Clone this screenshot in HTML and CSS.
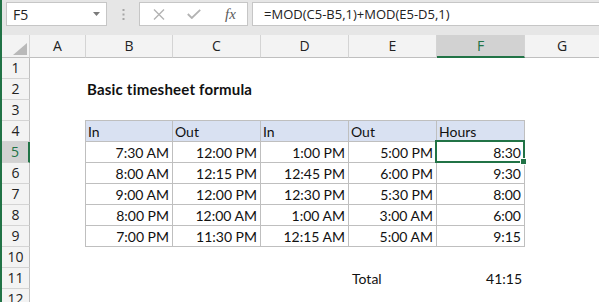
FILE: index.html
```html
<!DOCTYPE html>
<html lang="en">
<head>
    <meta charset="UTF-8">
    <title>Basic timesheet formula</title>
    <link rel="stylesheet" href="styles.css">
</head>
<body>

<div class="app">
    <div class="toolbar">
        <div class="name-box">
            <span>F5</span>
            <svg class="caret" width="7" height="4" viewBox="0 0 7 4"><path d="M0 0H7L3.5 4Z" fill="#7a7a7a"/></svg>
        </div>
        <svg class="grip" width="3" height="11" viewBox="0 0 3 11">
            <rect x="0.5" y="0" width="2" height="2" fill="#a6a6a6"/>
            <rect x="0.5" y="4.5" width="2" height="2" fill="#a6a6a6"/>
            <rect x="0.5" y="9" width="2" height="2" fill="#a6a6a6"/>
        </svg>
        <div class="fx-box">
            <svg width="12" height="11" viewBox="0 0 12 11"><path d="M1 0.5L11 10.5M11 0.5L1 10.5" stroke="#b3b3b3" stroke-width="1.4" fill="none"/></svg>
            <svg width="14" height="10" viewBox="0 0 14 10"><path d="M0.8 5L4.8 9L13.2 0.8" stroke="#b3b3b3" stroke-width="1.8" fill="none"/></svg>
            <span class="fx">fx</span>
        </div>
        <div class="formula">=MOD(C5-B5,1)+MOD(E5-D5,1)</div>
    </div>

    <div class="sheet">
        <div class="corner">
            <svg width="14" height="12" viewBox="0 0 14 12"><path d="M14 0V12H0Z" fill="#b9b9b9"/></svg>
        </div>
        <div class="col-head">A</div>
        <div class="col-head">B</div>
        <div class="col-head">C</div>
        <div class="col-head">D</div>
        <div class="col-head">E</div>
        <div class="col-head active">F</div>
        <div class="col-head last">G</div>

        <div class="row-head" style="grid-row: 2">1</div>
        <div class="row-head" style="grid-row: 3">2</div>
        <div class="row-head" style="grid-row: 4">3</div>
        <div class="row-head" style="grid-row: 5">4</div>
        <div class="row-head active" style="grid-row: 6">5</div>
        <div class="row-head" style="grid-row: 7">6</div>
        <div class="row-head" style="grid-row: 8">7</div>
        <div class="row-head" style="grid-row: 9">8</div>
        <div class="row-head" style="grid-row: 10">9</div>
        <div class="row-head" style="grid-row: 11">10</div>
        <div class="row-head" style="grid-row: 12">11</div>
        <div class="row-head" style="grid-row: 13">12</div>

        <div class="title">Basic timesheet formula</div>

        <div class="data">
            <div class="cell hd">In</div>
            <div class="cell hd">Out</div>
            <div class="cell hd">In</div>
            <div class="cell hd">Out</div>
            <div class="cell hd">Hours</div>

            <div class="cell">7:30 AM</div>
            <div class="cell">12:00 PM</div>
            <div class="cell">1:00 PM</div>
            <div class="cell">5:00 PM</div>
            <div class="cell selected">8:30</div>

            <div class="cell">8:00 AM</div>
            <div class="cell">12:15 PM</div>
            <div class="cell">12:45 PM</div>
            <div class="cell">6:00 PM</div>
            <div class="cell">9:30</div>

            <div class="cell">9:00 AM</div>
            <div class="cell">12:00 PM</div>
            <div class="cell">12:30 PM</div>
            <div class="cell">5:30 PM</div>
            <div class="cell">8:00</div>

            <div class="cell">8:00 PM</div>
            <div class="cell">12:00 AM</div>
            <div class="cell">1:00 AM</div>
            <div class="cell">3:00 AM</div>
            <div class="cell">6:00</div>

            <div class="cell">7:00 PM</div>
            <div class="cell">11:30 PM</div>
            <div class="cell">12:15 AM</div>
            <div class="cell">5:00 AM</div>
            <div class="cell">9:15</div>
        </div>

        <div class="total-label">Total</div>
        <div class="total-value">41:15</div>
    </div>
</div>

</body>
</html>
```

FILE: styles.css
```css
body {
    margin: 0;
    padding: 0;
    background: white;
    overflow: hidden;
}
.app {
    width: 599px;
    height: 302px;
    border-left: 2px solid #217346;
    box-sizing: border-box;
    overflow: hidden;
    font-family: "Open Sans", "Noto Sans", sans-serif;
}

/* formula bar */
.toolbar {
    height: 35px;
    background-color: #e6e6e6;
    display: flex;
    align-items: flex-start;
    padding: 2px 0 0 4px;
    box-sizing: border-box;
}
.name-box {
    width: 101px;
    height: 24px;
    box-sizing: border-box;
    background: white;
    border: 1px solid #c6c6c6;
    display: flex;
    align-items: center;
    justify-content: space-between;
    padding: 0 6px 0 6px;
    font-size: 14px;
    color: #222;
}
.grip {
    margin: 7px 0 0 15px;
}
.fx-box {
    width: 109px;
    height: 24px;
    box-sizing: border-box;
    margin-left: 14px;
    background: white;
    border: 1px solid #c6c6c6;
    display: flex;
    align-items: center;
    padding-left: 13px;
    gap: 22px;
}
.fx {
    font-family: "Liberation Serif", serif;
    font-style: italic;
    font-size: 15px;
    color: #5a5a5a;
    margin-left: 2px;
}
.formula {
    flex: 1;
    height: 24px;
    box-sizing: border-box;
    margin-left: 4px;
    background: white;
    border: 1px solid #c6c6c6;
    border-right: none;
    padding-left: 11px;
    line-height: 22px;
    font-size: 13px;
    color: #222;
    white-space: nowrap;
}

/* grid */
.sheet {
    display: grid;
    grid-template-columns: 28px 56px 87px 88px 88px 88px 88px 1fr;
    grid-template-rows: 23px repeat(12, 21px);
}
.corner {
    grid-row: 1;
    grid-column: 1;
    background: #f3f3f3;
    border-right: 1px solid #d4d4d4;
    border-bottom: 1px solid #bfbfbf;
    display: flex;
    align-items: flex-end;
    justify-content: flex-end;
    padding: 0 2px 2px 0;
}
.col-head {
    grid-row: 1;
    background: #f3f3f3;
    border-right: 1px solid #d4d4d4;
    border-bottom: 1px solid #bfbfbf;
    text-align: center;
    line-height: 22px;
    font-size: 14px;
    color: #222;
}
.col-head.last {
    border-right: none;
}
.col-head.active {
    background: #d2d2d2;
    color: #217346;
    border-bottom: 2px solid #217346;
}
.row-head {
    grid-column: 1;
    background: #f3f3f3;
    border-right: 1px solid #bfbfbf;
    border-bottom: 1px solid #d4d4d4;
    text-align: center;
    line-height: 20px;
    font-size: 14px;
    color: #222;
}
.row-head.active {
    background: #d2d2d2;
    color: #217346;
    border-right: 2px solid #217346;
}

/* cells */
.title,
.cell,
.total-label,
.total-value {
    font-family: "Lato", "Liberation Sans", sans-serif;
    font-size: 14px;
    color: #111;
    line-height: 20px;
    white-space: nowrap;
}
.title {
    grid-row: 3;
    grid-column: 3 / 6;
    font-weight: bold;
    font-size: 15px;
    letter-spacing: 0.2px;
    padding-left: 1px;
}
.data {
    grid-row: 5 / 11;
    grid-column: 3 / 8;
    margin: -1px 0 0 -1px;
    border-left: 1px solid #bfbfbf;
    border-top: 1px solid #bfbfbf;
    display: grid;
    grid-template-columns: 87px repeat(4, 88px);
    grid-auto-rows: 21px;
}
.cell {
    box-sizing: border-box;
    border-right: 1px solid #bfbfbf;
    border-bottom: 1px solid #bfbfbf;
    text-align: right;
    padding: 1px 3px 0 0;
}
.cell.hd {
    background-color: #d9e1f2;
    text-align: left;
    padding-left: 2px;
}
.cell.selected {
    position: relative;
}
.cell.selected::before {
    content: "";
    position: absolute;
    left: -2px;
    top: -2px;
    right: -1px;
    bottom: -1px;
    border: 2px solid #217346;
}
.cell.selected::after {
    content: "";
    position: absolute;
    right: -3px;
    bottom: -3px;
    width: 5px;
    height: 5px;
    background: #217346;
    border: 1px solid white;
}
.total-label {
    grid-row: 12;
    grid-column: 6;
    padding: 1px 0 0 3px;
}
.total-value {
    grid-row: 12;
    grid-column: 7;
    text-align: right;
    padding: 1px 3px 0 0;
}
```
